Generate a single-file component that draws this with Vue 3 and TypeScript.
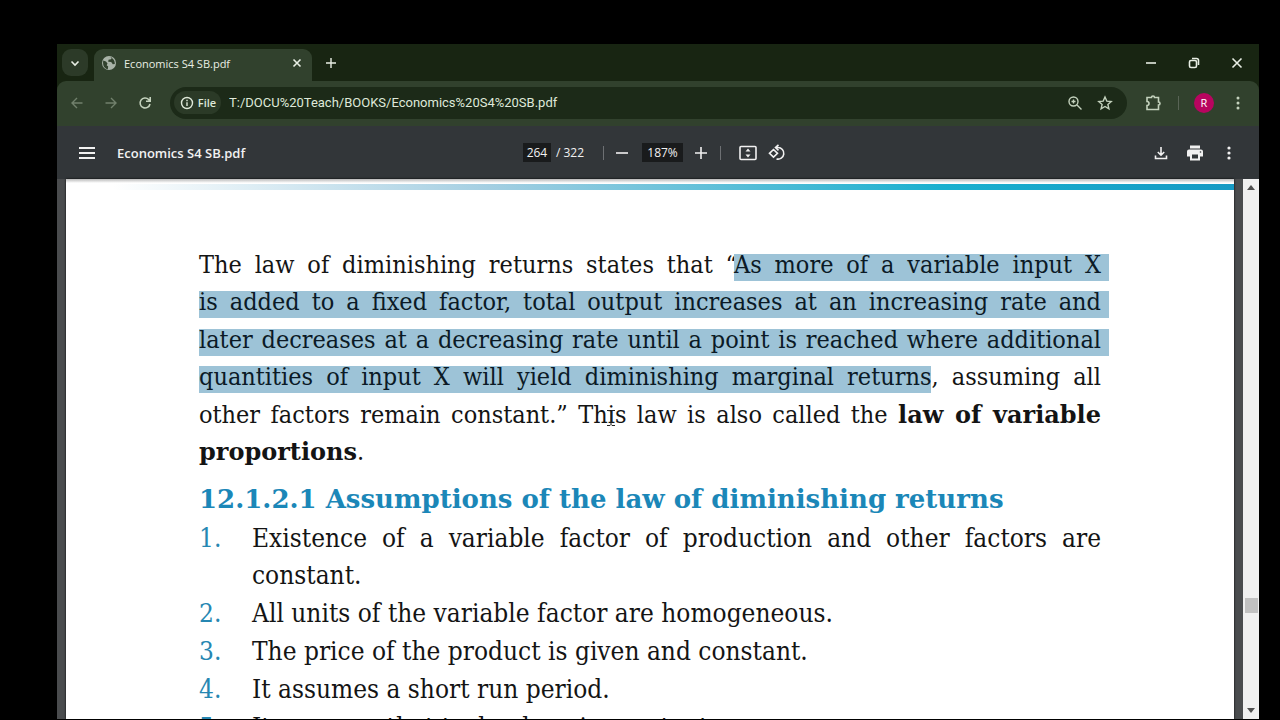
<script setup lang="ts">
import { ref } from 'vue'

interface Line {
  before?: string
  marked?: string
  after?: string
  bold?: string
  tail?: string
  justify?: boolean
  bleed?: boolean
}

const address = ref('T:/DOCU%20Teach/BOOKS/Economics%20S4%20SB.pdf')
const page = ref('264')
const zoom = ref('187%')

const law: Line[] = [
  { before: 'The law of diminishing returns states that “', marked: 'As more of a variable input X', justify: true, bleed: true },
  { marked: 'is added to a fixed factor, total output increases at an increasing rate and', justify: true, bleed: true },
  { marked: 'later decreases at a decreasing rate until a point is reached where additional', justify: true, bleed: true },
  { marked: 'quantities of input X will yield diminishing marginal returns', after: ', assuming all', justify: true },
  { before: 'other factors remain constant.” This law is also called the ', bold: 'law of variable', justify: true },
  { bold: 'proportions', tail: '.' },
]

const assumptions: string[][] = [
  ['Existence of a variable factor of production and other factors are', 'constant.'],
  ['All units of the variable factor are homogeneous.'],
  ['The price of the product is given and constant.'],
  ['It assumes a short run period.'],
  ['It assumes that technology is constant.'],
]
</script>

<template>
  <div class="screen">
    <div class="window">
      <header class="tabs">
        <button class="tab-search" aria-label="Search tabs">
          <svg width="16" height="16" viewBox="0 0 16 16"><path d="M4.5 6.5 8 10l3.5-3.5" class="s2" /></svg>
        </button>
        <div class="tab">
          <svg width="16" height="16" viewBox="0 0 16 16">
            <circle cx="8" cy="8" r="7" fill="#a9b3a8" />
            <path d="M2.2 5.5 5 6.5l1.500 2-.8 1.700 1.500 1.300-.4 2.800C3.500 13.500 1.500 11 2.200 5.500ZM7 2l4 .2-1 2-2.500.6-.3 2 3 .2 1.600 2.300 2-.3c.2-3-1.800-6-4.300-6.800Z" fill="#31412d" />
          </svg>
          <span class="tab-title">Economics S4 SB.pdf</span>
          <button aria-label="Close tab"><svg width="16" height="16" viewBox="0 0 16 16"><path d="m4.500 4.500 7 7m0-7-7 7" class="s2" /></svg></button>
        </div>
        <button class="new-tab" aria-label="New tab"><svg width="16" height="16" viewBox="0 0 16 16"><path d="M8 3v10M3 8h10" class="s1" /></svg></button>
        <div class="caption">
          <button aria-label="Minimize"><svg width="16" height="16" viewBox="0 0 16 16"><path d="M3 8h10" class="s2" /></svg></button>
          <button aria-label="Restore"><svg width="16" height="16" viewBox="0 0 16 16"><rect x="3.500" y="5.500" width="7" height="7" rx="1.500" class="s2" /><path d="M6 3.500h4.500a2 2 0 0 1 2 2V10" class="s2" /></svg></button>
          <button aria-label="Close"><svg width="16" height="16" viewBox="0 0 16 16"><path d="m3.500 3.500 9 9m0-9-9 9" class="s2" /></svg></button>
        </div>
      </header>

      <nav class="address-row">
        <button class="dim" aria-label="Back"><svg width="16" height="16" viewBox="0 0 16 16"><path d="M13.500 8H3M8 3 3 8l5 5" class="s1" /></svg></button>
        <button class="dim" aria-label="Forward"><svg width="16" height="16" viewBox="0 0 16 16"><path d="M2.500 8H13M8 3l5 5-5 5" class="s1" /></svg></button>
        <button aria-label="Reload"><svg width="16" height="16" viewBox="0 0 16 16"><path d="M13 9a5 5 0 1 1-1.300-4.500L13 6M13.200 2v4.200H9" class="s2" /></svg></button>
        <div class="omnibox">
          <button class="chip">
            <svg width="16" height="16" viewBox="0 0 16 16"><circle cx="8" cy="8" r="5.500" class="s1" /><path d="M8 7.300V11M8 4.800v1.400" class="s1" /></svg>
            File
          </button>
          <input v-model="address" class="url" aria-label="Address" />
          <button aria-label="Zoom"><svg width="16" height="16" viewBox="0 0 16 16"><circle cx="6.500" cy="6.500" r="4.500" class="s1" /><path d="m10 10 4.500 4.500M6.500 4.500v4M4.500 6.500h4" class="s1" /></svg></button>
          <button aria-label="Bookmark"><svg width="16" height="16" viewBox="0 0 16 16"><path d="m8 2 1.800 4.100 4.400.4-3.300 2.900 1 4.400L8 11.500l-3.900 2.300 1-4.400L1.800 6.500l4.400-.4Z" class="s1" /></svg></button>
        </div>
        <button aria-label="Extensions"><svg width="18" height="18" viewBox="0 0 18 18"><path d="M3 3.500h4.500a1.500 1.500 0 0 1 3 0H14.500V8a1.500 1.500 0 0 1 0 3v4.500H3v-4a2 2 0 0 0 0-4Z" class="s2" /></svg></button>
        <i class="rule"></i>
        <button class="avatar" aria-label="Profile">R</button>
        <button class="menu" aria-label="Chrome menu"><svg width="16" height="16" viewBox="0 0 16 16" fill="currentColor"><circle cx="8" cy="3" r="1.500" /><circle cx="8" cy="8" r="1.500" /><circle cx="8" cy="13" r="1.500" /></svg></button>
      </nav>

      <div class="pdf-bar">
        <div class="pdf-left">
          <button aria-label="Menu"><svg width="16" height="16" viewBox="0 0 16 16"><path d="M0 3h16M0 8h16M0 13h16" class="s3" /></svg></button>
          <span class="pdf-title">Economics S4 SB.pdf</span>
        </div>
        <div class="pdf-mid">
          <input v-model="page" class="page-box" aria-label="Page number" />
          <span class="total">/ 322</span>
          <i class="rule"></i>
          <button aria-label="Zoom out"><svg width="16" height="16" viewBox="0 0 16 16"><path d="M2 8h12" class="s2" /></svg></button>
          <input v-model="zoom" class="zoom-box" aria-label="Zoom level" />
          <button aria-label="Zoom in"><svg width="16" height="16" viewBox="0 0 16 16"><path d="M2 8h12M8 2v12" class="s2" /></svg></button>
          <i class="rule"></i>
          <button class="fit" aria-label="Fit to page"><svg width="20" height="16" viewBox="0 0 20 16"><rect x="2" y="1.500" width="16" height="13" rx="1" class="s2" /><path d="m7.500 6.500 2.500-3 2.500 3Zm0 3 2.500 3 2.500-3Z" fill="currentColor" /></svg></button>
          <button aria-label="Rotate"><svg width="18" height="18" viewBox="0 0 18 18"><path d="m5.500 5.500 4 3.800-4 3.800-4-3.800ZM8 3.500h2a5.800 5.800 0 1 1-1.500 11.400M10.500.8 7.500 3.500l3 2.800" class="s2" /></svg></button>
        </div>
        <div class="pdf-right">
          <button aria-label="Download"><svg width="16" height="16" viewBox="0 0 16 16"><path d="M8 2v8M4.800 7 8 10.200 11.200 7M2.500 10.500v3h11v-3" class="s2" /></svg></button>
          <button aria-label="Print"><svg width="18" height="18" viewBox="0 0 18 18"><path d="M4 1.500h10v3H4ZM3 5.500h12a2 2 0 0 1 2 2v5h-3v4H4v-4H1v-5a2 2 0 0 1 2-2Zm3 5v4h6v-4Z" fill="currentColor" fill-rule="evenodd" /><circle cx="14.500" cy="8" r="0.800" fill="#323639" /></svg></button>
          <button aria-label="More actions"><svg width="16" height="16" viewBox="0 0 16 16" fill="currentColor"><circle cx="8" cy="3" r="1.600" /><circle cx="8" cy="8" r="1.600" /><circle cx="8" cy="13" r="1.600" /></svg></button>
        </div>
      </div>

      <div class="viewer">
        <main class="sheet">
          <div class="band"></div>
          <article>
            <p class="law">
              <span v-for="(l, i) in law" :key="i" class="line" :class="{ justify: l.justify }">{{ l.before }}<mark v-if="l.marked" :class="{ bleed: l.bleed }">{{ l.marked }}</mark>{{ l.after }}<b v-if="l.bold">{{ l.bold }}</b>{{ l.tail }}</span>
            </p>
            <h2>12.1.2.1 Assumptions of the law of diminishing returns</h2>
            <ol>
              <li v-for="(item, n) in assumptions" :key="n">
                <span class="num">{{ n + 1 }}.</span>
                <div class="item">
                  <span v-for="(t, k) in item" :key="k" class="line" :class="{ justify: k < item.length - 1 }">{{ t }}</span>
                </div>
              </li>
            </ol>
          </article>
          <svg class="cursor" width="12" height="18" viewBox="0 0 12 18"><path d="M2 1.500h3l1 1 1-1h3M6 2.500v13M2 16.500h3l1-1 1 1h3" fill="none" stroke="#222" /></svg>
        </main>
        <div class="scrollbar">
          <svg width="8" height="5" viewBox="0 0 8 5"><path d="M0 5 4 0l4 5Z" fill="#505050" /></svg>
          <div class="thumb"></div>
          <svg width="8" height="5" viewBox="0 0 8 5"><path d="m0 0 4 5 4-5Z" fill="#505050" /></svg>
        </div>
      </div>
    </div>
  </div>
</template>

<style>
body {
  background: #000;
  overflow: hidden;
}
</style>

<style scoped>
* {
  box-sizing: border-box;
}
.screen {
  height: 100vh;
  padding: 44px 21px 1px 57px;
  background: #000;
  font-family: "Open Sans", "Noto Sans", sans-serif;
}
.window {
  height: 100%;
  display: flex;
  flex-direction: column;
  overflow: hidden;
  background: #182512;
}
button {
  display: flex;
  align-items: center;
  justify-content: center;
  flex: none;
  padding: 0;
  border: 0;
  background: none;
  color: inherit;
  font: inherit;
}
input {
  border: 0;
  padding: 0;
  color: inherit;
  font: inherit;
  min-width: 0;
}
svg {
  display: block;
  flex: none;
}
.s1,
.s2,
.s3 {
  fill: none;
  stroke: currentColor;
  stroke-width: 1.4;
}
.s2 {
  stroke-width: 1.6;
}
.s3 {
  stroke-width: 2;
}
.tabs {
  flex: none;
  height: 37px;
  display: flex;
  align-items: center;
  color: #e8eee4;
  padding-left: 5px;
}
.tab-search {
  width: 26px;
  height: 27px;
  border-radius: 9px;
  background: #2c3a28;
}
.tab {
  width: 218px;
  height: 32px;
  margin: 5px 0 0 6px;
  padding: 0 7px 4px 7px;
  display: flex;
  align-items: center;
  border-radius: 9px 9px 0 0;
  background: #31412d;
}
.tab-title {
  flex: 1;
  margin-left: 7px;
  font-size: 11px;
  white-space: nowrap;
}
.new-tab {
  width: 38px;
}
.caption {
  display: flex;
  margin-left: auto;
  padding-right: 1px;
}
.caption button {
  width: 43px;
}
.address-row {
  flex: none;
  height: 45px;
  display: flex;
  align-items: center;
  padding: 0 13px 2px 11px;
  border-radius: 9px 9px 0 0;
  background: #31412d;
  color: #c4d2bd;
}
.address-row > button {
  width: 18px;
  margin-right: 16px;
}
.address-row > .dim {
  color: #71806c;
}
.omnibox {
  flex: 1;
  min-width: 0;
  height: 32px;
  margin-right: 17px;
  padding: 0 14px 0 4px;
  display: flex;
  align-items: center;
  gap: 14px;
  border-radius: 16px;
  background: #1c2a18;
}
.chip {
  height: 23px;
  width: 47px;
  gap: 3px;
  border-radius: 12px;
  background: #2b3a27;
  color: #dfe9d9;
  font-size: 11px;
  font-weight: 600;
}
.url {
  flex: 1;
  margin-left: -6px;
  background: none;
  color: #dfe9d9;
  font-family: Roboto, sans-serif;
  font-size: 13px;
}
.rule {
  flex: none;
  width: 1px;
  height: 14px;
  background: #596456;
}
.address-row > .avatar {
  width: 20px;
  height: 20px;
  margin: 0 16px 0 15px;
  border-radius: 50%;
  background: #b8045f;
  color: #fff;
  font-size: 11px;
}
.address-row > .menu {
  margin-right: 0;
  width: 16px;
}
.pdf-bar {
  flex: none;
  height: 53px;
  display: grid;
  grid-template-columns: 1fr auto 1fr;
  align-items: center;
  padding: 0 22px;
  background: #323639;
  color: #f1f1f1;
}
.pdf-left,
.pdf-mid,
.pdf-right {
  display: flex;
  align-items: center;
}
.pdf-title {
  margin-left: 22px;
  font-size: 13px;
  font-weight: 600;
}
.pdf-mid {
  margin-right: 7px;
  font-size: 12px;
}
.page-box,
.zoom-box {
  width: 28px;
  height: 19px;
  background: #191b1c;
  text-align: center;
}
.zoom-box {
  width: 41px;
  margin: 0 10px 0 12px;
}
.total {
  margin-left: 5px;
}
.pdf-mid .rule {
  margin: 0 10px 0 19px;
  background: #6d7073;
}
.pdf-mid .zoom-box ~ .rule {
  margin: 0 17px 0 11px;
}
.fit {
  margin-right: 10px;
}
.pdf-right {
  justify-content: flex-end;
  gap: 17px;
}
.viewer {
  flex: 1;
  min-height: 0;
  display: flex;
  padding-left: 9px;
  background: #4a4c4e;
}
.sheet {
  position: relative;
  flex: 1;
  min-width: 0;
  overflow: hidden;
  margin-right: 9px;
  padding-top: 5px;
  background: linear-gradient(#b9b9b9, #fff 4px);
  box-shadow: 0 0 2px #000;
}
.band {
  height: 6px;
  background: linear-gradient(90deg, #fff 4%, #a5cfe2 36%, #1ab0cf 75%, #169ac4);
}
article {
  padding: 56px 133px 0 133px;
  font-family: "DejaVu Serif Condensed", "DejaVu Serif", serif;
  font-size: 26px;
  color: #141414;
}
p,
h2,
ol {
  margin: 0;
  padding: 0;
}
.law {
  font-size: 25px;
}
.law b {
  font-family: "DejaVu Serif", serif;
  font-size: 24px;
}
.line {
  display: block;
  height: 37px;
  line-height: 37px;
  white-space: nowrap;
}
.line:nth-child(even) {
  height: 38px;
}
.justify {
  text-align-last: justify;
}
mark {
  padding-bottom: 2px;
  background: linear-gradient(#9dc3d7, #9dc3d7) no-repeat 0 4px;
  color: #0b1a26;
}
.bleed {
  padding-right: 8px;
  margin-right: -8px;
}
h2 {
  margin: 10px 0 2px;
  font-family: "DejaVu Serif", serif;
  font-size: 26px;
  line-height: 37px;
  color: #1b87b8;
  white-space: nowrap;
}
li {
  display: flex;
  min-height: 38px;
}
.num {
  width: 53px;
  flex: none;
  line-height: 37px;
  color: #2687b2;
}
.item {
  flex: 1;
}
.cursor {
  position: absolute;
  left: 539px;
  top: 230px;
}
.scrollbar {
  flex: none;
  width: 16px;
  display: flex;
  flex-direction: column;
  align-items: center;
  padding: 6px 0;
  background: #f0f0f0;
}
.thumb {
  width: 13px;
  height: 15px;
  margin: auto 0 95px;
  background: #c1c1c1;
}
</style>
